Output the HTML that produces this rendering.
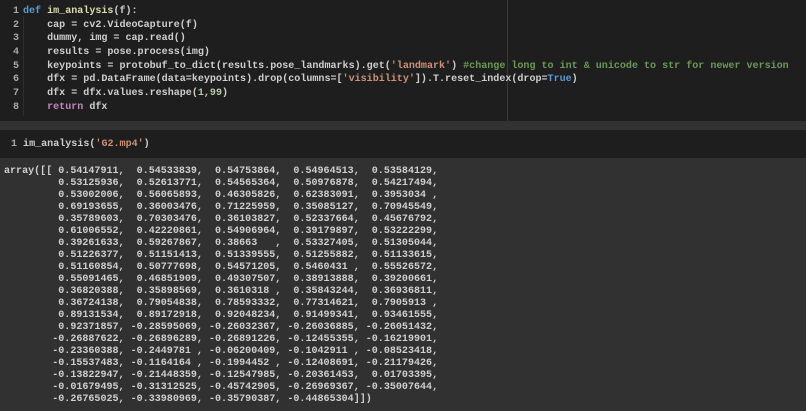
<!DOCTYPE html>
<html><head><meta charset="utf-8"><style>
body{margin:0;width:806px;height:411px;overflow:hidden;background:#313131;font-family:"Liberation Mono",monospace;font-size:10.05px;font-weight:bold;color:#cfcfcf;position:relative}
.c1{position:absolute;left:0;top:0;width:806px;height:121px;background:#1e1e1e}
.gap{position:absolute;left:0;top:121px;width:806px;height:9px;background:#333}
.c2{position:absolute;left:0;top:130px;width:806px;height:28px;background:#1e1e1e}
pre{margin:0;font:inherit;position:absolute;white-space:pre}
.ln{left:0;width:19px;text-align:right;color:#a8a8a8;top:5px;line-height:13.65px}
.code{left:23px;top:5px;line-height:13.65px}
.gl{position:absolute;left:23px;top:16px;width:1px;height:100px;background:#2e2e2e}
.rl{position:absolute;left:507px;top:0;width:1px;height:121px;background:#3a3a3a}
.k{color:#569cd6}.f{color:#dcdcaa}.s{color:#ce9178}.n{color:#b5cea8}.cm{color:#6a9955}.r{color:#c586c0}
.out{left:4px;top:165.5px;line-height:12.05px;color:#d0d0d0}
</style></head><body>
<div class="c1"></div><div class="gap"></div><div class="c2"></div>
<div class="gl"></div><div class="rl"></div>
<pre class="ln">1
2
3
4
5
6
7
8</pre>
<pre class="code"><span class="k">def</span> <span class="f">im_analysis</span>(f):
    cap = cv2.VideoCapture(f)
    dummy, img = cap.read()
    results = pose.process(img)
    keypoints = protobuf_to_dict(results.pose_landmarks).get(<span class="s">'landmark'</span>) <span class="cm">#change long to int &amp; unicode to str for newer version</span>
    dfx = pd.DataFrame(data=keypoints).drop(columns=[<span class="s">'visibility'</span>]).T.reset_index(drop=<span class="k">True</span>)
    dfx = dfx.values.reshape(<span class="n">1</span>,<span class="n">99</span>)
    <span class="r">return</span> dfx</pre>
<pre class="code" style="left:11px;top:138px"><span style="color:#a8a8a8">1</span> im_analysis(<span class="s">'G2.mp4'</span>)</pre>
<pre class="out">array([[ 0.54147911,  0.54533839,  0.54753864,  0.54964513,  0.53584129,
         0.53125936,  0.52613771,  0.54565364,  0.50976878,  0.54217494,
         0.53002006,  0.56065893,  0.46305826,  0.62383091,  0.3953034 ,
         0.69193655,  0.36003476,  0.71225959,  0.35085127,  0.70945549,
         0.35789603,  0.70303476,  0.36103827,  0.52337664,  0.45676792,
         0.61006552,  0.42220861,  0.54906964,  0.39179897,  0.53222299,
         0.39261633,  0.59267867,  0.38663   ,  0.53327405,  0.51305044,
         0.51226377,  0.51151413,  0.51339555,  0.51255882,  0.51133615,
         0.51160854,  0.50777698,  0.54571205,  0.5460431 ,  0.55526572,
         0.55091465,  0.46851909,  0.49307507,  0.38913888,  0.39200661,
         0.36820388,  0.35898569,  0.3610318 ,  0.35843244,  0.36936811,
         0.36724138,  0.79054838,  0.78593332,  0.77314621,  0.7905913 ,
         0.89131534,  0.89172918,  0.92048234,  0.91499341,  0.93461555,
         0.92371857, -0.28595069, -0.26032367, -0.26036885, -0.26051432,
        -0.26887622, -0.26896289, -0.26891226, -0.12455355, -0.16219901,
        -0.23360388, -0.2449781 , -0.06200409, -0.1042911 , -0.08523418,
        -0.15537483, -0.1164164 , -0.1994452 , -0.12408691, -0.21179426,
        -0.13822947, -0.21448359, -0.12547985, -0.20361453,  0.01703395,
        -0.01679495, -0.31312525, -0.45742905, -0.26969367, -0.35007644,
        -0.26765025, -0.33980969, -0.35790387, -0.44865304]])</pre>
</body></html>
